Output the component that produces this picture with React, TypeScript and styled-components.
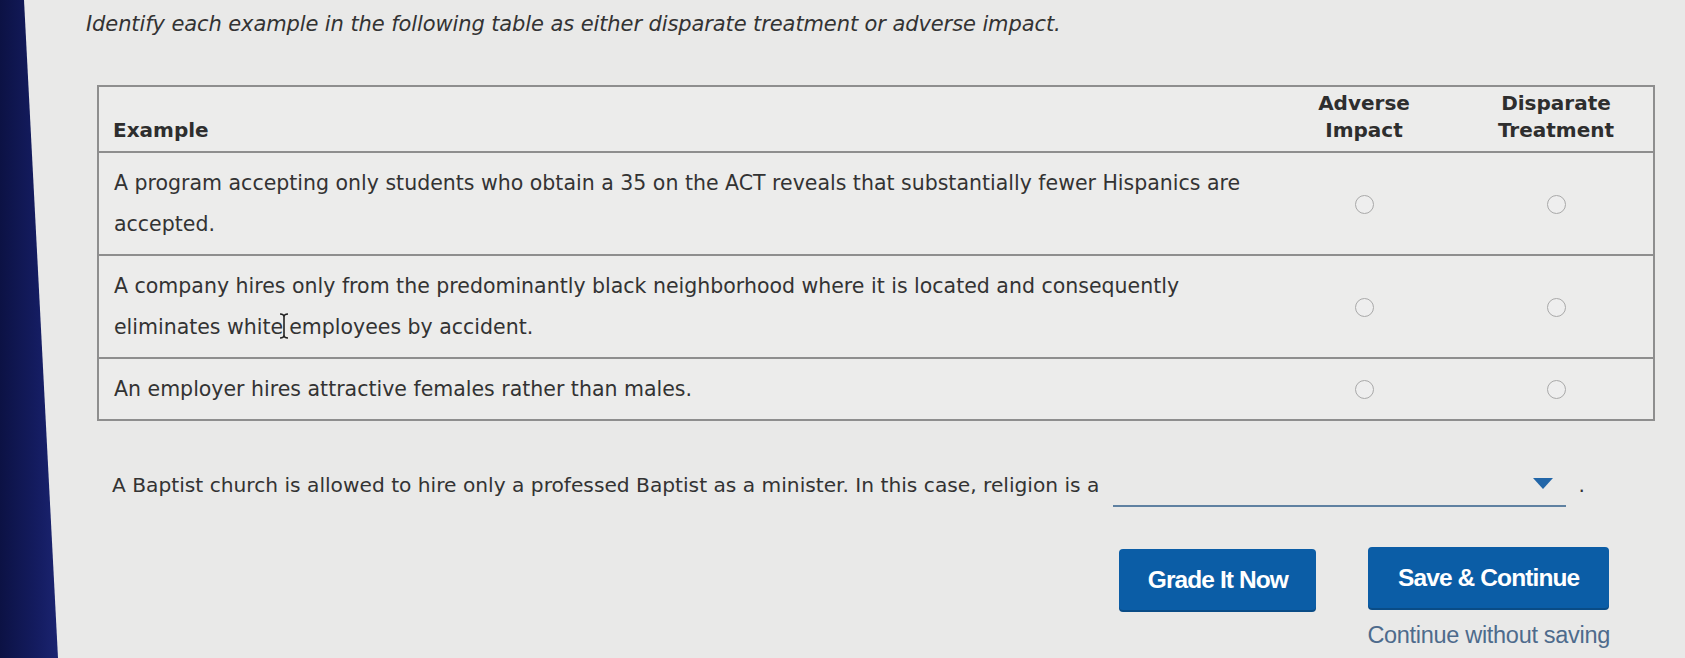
import React from 'react';
import styled, { createGlobalStyle } from 'styled-components';

const GlobalStyle = createGlobalStyle`
  html, body {
    margin: 0;
    padding: 0;
    background: #e9e9e8;
  }
  body {
    font-family: 'DejaVu Sans', Verdana, sans-serif;
    color: #333;
  }
`;

const rows = [
  'A program accepting only students who obtain a 35 on the ACT reveals that substantially fewer Hispanics are accepted.',
  'A company hires only from the predominantly black neighborhood where it is located and consequently eliminates white',
  'An employer hires attractive females rather than males.',
];

const App = () => {
  return (
    <>
      <GlobalStyle />
      <PageStyle>
        <SideBandStyle />
        <MainStyle>
          <TitleStyle>
            Identify each example in the following table as either disparate treatment or adverse impact.
          </TitleStyle>

          <TableStyle>
            <colgroup>
              <col />
              <col style={{ width: 190 }} />
              <col style={{ width: 195 }} />
            </colgroup>
            <thead>
              <tr>
                <HeadCell $align="left">Example</HeadCell>
                <HeadCell $align="center">
                  Adverse
                  <br />
                  Impact
                </HeadCell>
                <HeadCell $align="center">
                  Disparate
                  <br />
                  Treatment
                </HeadCell>
              </tr>
            </thead>
            <tbody>
              {rows.map((text, i) => (
                <tr key={i}>
                  <TextCell>
                    {text}
                    {i === 1 && (
                      <>
                        <CursorStyle>
                          <svg width="12" height="28" viewBox="0 0 12 28">
                            <path
                              d="M2 2 Q6 2 6 5 Q6 2 10 2 M6 5 L6 23 M2 26 Q6 26 6 23 Q6 26 10 26"
                              stroke="#222"
                              strokeWidth="1.6"
                              fill="none"
                            />
                          </svg>
                        </CursorStyle>
                        employees by accident.
                      </>
                    )}
                  </TextCell>
                  <RadioCell>
                    <Radio />
                  </RadioCell>
                  <RadioCell>
                    <Radio />
                  </RadioCell>
                </tr>
              ))}
            </tbody>
          </TableStyle>

          <SentenceStyle>
            A Baptist church is allowed to hire only a professed Baptist as a minister. In this case, religion is a
            <DropdownStyle>
              <svg width="22" height="13" viewBox="0 0 22 13">
                <path d="M1 1 L21 1 L11 12 Z" fill="#2266a8" />
              </svg>
            </DropdownStyle>
            <PeriodStyle>.</PeriodStyle>
          </SentenceStyle>

          <ActionsStyle>
            <ButtonStyle>Grade It Now</ButtonStyle>
            <SaveGroupStyle>
              <ButtonStyle $wide>Save &amp; Continue</ButtonStyle>
              <LinkStyle>Continue without saving</LinkStyle>
            </SaveGroupStyle>
          </ActionsStyle>
        </MainStyle>
      </PageStyle>
    </>
  );
};

export default App;

const PageStyle = styled.div`
  display: flex;
  width: 1685px;
  height: 658px;
  overflow: hidden;
`;

const SideBandStyle = styled.div`
  flex: 0 0 58px;
  background: linear-gradient(90deg, #0c1244 0%, #151d63 70%, #1b2470 100%);
  clip-path: polygon(0 0, 24px 0, 58px 100%, 0 100%);
`;

const MainStyle = styled.div`
  flex: 1;
  margin-left: -22px;
  padding: 10px 30px 0 50px;
  display: flex;
  flex-direction: column;
`;

const TitleStyle = styled.div`
  font-style: italic;
  font-size: 21px;
  line-height: 28px;
  color: #333;
  letter-spacing: -0.1px;
`;

const TableStyle = styled.table`
  margin: 47px 0 0 11px;
  width: 1558px;
  border-collapse: collapse;
  background: #ececeb;
  border: 2px solid #8e8e8e;
  table-layout: fixed;
`;

const HeadCell = styled.th<{ $align: 'left' | 'center' }>`
  text-align: ${({ $align }) => $align};
  vertical-align: bottom;
  font-weight: bold;
  font-size: 20px;
  line-height: 27px;
  color: #2e2e2e;
  padding: 3px ${({ $align }) => ($align === 'left' ? '14px' : '0')} 7px;
  border-bottom: 2px solid #8e8e8e;
`;

const TextCell = styled.td`
  font-size: 20.5px;
  line-height: 41px;
  color: #333;
  padding: 10px 8px 9px 15px;
  border-bottom: 2px solid #8e8e8e;
`;

const CursorStyle = styled.span`
  display: inline-block;
  width: 6px;
  position: relative;
  vertical-align: middle;

  svg {
    position: absolute;
    left: -5px;
    top: -16px;
  }
`;

const RadioCell = styled.td`
  text-align: center;
  vertical-align: middle;
  border-bottom: 2px solid #8e8e8e;
`;

const Radio = styled.span`
  display: inline-block;
  width: 17px;
  height: 17px;
  border-radius: 50%;
  border: 1.5px solid #a9a9a9;
  background: #eeeeee;
  vertical-align: middle;
`;

const SentenceStyle = styled.div`
  margin: 50px 0 0 26px;
  display: flex;
  align-items: flex-end;
  font-size: 20.2px;
  line-height: 28px;
  color: #333;
`;

const DropdownStyle = styled.span`
  width: 453px;
  height: 30px;
  margin-left: 14px;
  border-bottom: 2px solid #5f81a1;
  display: flex;
  justify-content: flex-end;
  align-items: flex-start;
  padding: 0 12px 0 0;
  box-sizing: border-box;
  margin-bottom: -8px;
`;

const PeriodStyle = styled.span`
  margin-left: 12px;
`;

const ActionsStyle = styled.div`
  margin-top: 48px;
  display: flex;
  justify-content: flex-end;
  align-items: flex-start;
  gap: 51px;
  padding-right: 45px;
`;

const SaveGroupStyle = styled.div`
  display: flex;
  flex-direction: column;
  align-items: center;
`;

const ButtonStyle = styled.button<{ $wide?: boolean }>`
  width: ${({ $wide }) => ($wide ? '241px' : '197px')};
  height: 61px;
  margin-top: ${({ $wide }) => ($wide ? '0' : '2px')};
  border: none;
  border-radius: 4px;
  background: #0b5da6;
  box-shadow: 0 2px 0 #0a4c86;
  color: #fff;
  font-family: 'Liberation Sans', Arial, sans-serif;
  font-weight: bold;
  font-size: 24.5px;
  letter-spacing: -0.9px;
`;

const LinkStyle = styled.span`
  margin-top: 14px;
  font-family: 'Liberation Sans', Arial, sans-serif;
  font-size: 23.5px;
  color: #4e6b8c;
  letter-spacing: -0.3px;
`;
